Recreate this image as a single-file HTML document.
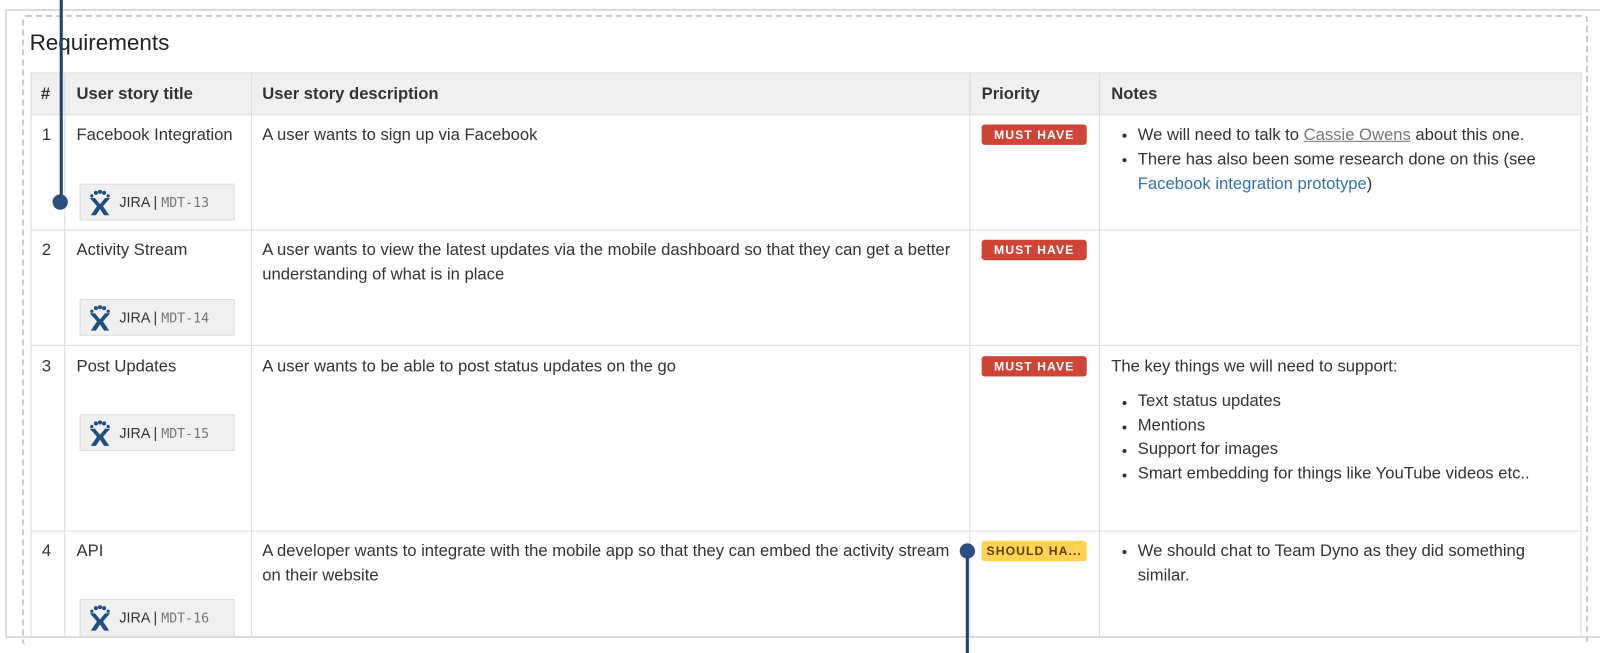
<!DOCTYPE html>
<html><head><meta charset="utf-8"><style>
*{margin:0;padding:0;box-sizing:border-box}
body{width:1600px;height:645px;background:#fff;position:relative;overflow:hidden;font-family:"Liberation Sans",Arial,sans-serif;color:#333;font-size:16.3px}
#w{position:absolute;left:0;top:0;width:1568px;height:632px;transform:scale(1.0204);transform-origin:0 0}
.a{position:absolute;white-space:nowrap;line-height:24px}
.hl{position:absolute;background:#ddd;height:1px}
.vl{position:absolute;background:#ddd;width:1px}
.badge{position:absolute;background:#d04437;color:#fff;font-weight:bold;font-size:12px;letter-spacing:1px;border-radius:3px;height:20px;line-height:20px;text-align:center;width:103px}
.jira{position:absolute;left:78px;width:152px;height:36px;background:#f0f0f0;border:1px solid #ddd;font-size:14px;line-height:34px;padding-left:38px;color:#333}
.jira span{color:#777;font-family:"DejaVu Sans Mono","Liberation Mono",monospace;font-size:13px}
.jira svg{position:absolute;left:7px;top:5px}
ul{list-style:none}
li{position:relative;padding-left:26px}
li:before{content:"";position:absolute;left:11px;top:11px;width:4px;height:4px;border-radius:2px;background:#333}
</style></head><body>
<div style="position:absolute;left:5px;top:9px;width:1600px;height:629px;border:2px solid #ddd;border-right:none"></div>
<div style="position:absolute;left:22px;top:15px;width:1566px;height:630px;border:2px dashed #ccc;border-bottom:none;border-radius:4px"></div>
<div id="w">
<div class="a" style="left:29px;top:29px;font-size:22px;line-height:26px;color:#222">Requirements</div>
<div style="position:absolute;left:30px;top:72px;width:1520px;height:40px;background:#f0f0f0"></div>
<div class="hl" style="left:30px;top:71px;width:1520px"></div>
<div class="hl" style="left:30px;top:112px;width:1520px"></div>
<div class="hl" style="left:30px;top:225px;width:1520px"></div>
<div class="hl" style="left:30px;top:338px;width:1520px"></div>
<div class="hl" style="left:30px;top:520px;width:1520px"></div>
<div class="vl" style="left:30px;top:71px;height:553px"></div>
<div class="vl" style="left:63px;top:71px;height:553px"></div>
<div class="vl" style="left:246px;top:71px;height:553px"></div>
<div class="vl" style="left:950px;top:71px;height:553px"></div>
<div class="vl" style="left:1077px;top:71px;height:553px"></div>
<div class="vl" style="left:1549px;top:71px;height:553px"></div>
<div class="a" style="left:40px;top:80px;font-weight:bold">#</div>
<div class="a" style="left:75px;top:80px;font-weight:bold">User story title</div>
<div class="a" style="left:257px;top:80px;font-weight:bold">User story description</div>
<div class="a" style="left:962px;top:80px;font-weight:bold">Priority</div>
<div class="a" style="left:1089px;top:80px;font-weight:bold">Notes</div>

<div class="a" style="left:41px;top:120px">1</div>
<div class="a" style="left:75px;top:120px">Facebook Integration</div>
<div class="a" style="left:257px;top:120px">A user wants to sign up via Facebook</div>
<div class="badge" style="left:962px;top:122px">MUST HAVE</div>
<ul class="a" style="left:1089px;top:120px"><li>We will need to talk to <span style="color:#777;text-decoration:underline">Cassie Owens</span> about this one.</li><li>There has also been some research done on this (see<br><span style="color:#3572b0">Facebook integration prototype</span>)</li></ul>

<div class="a" style="left:41px;top:233px">2</div>
<div class="a" style="left:75px;top:233px">Activity Stream</div>
<div class="a" style="left:257px;top:233px">A user wants to view the latest updates via the mobile dashboard so that they can get a better<br>understanding of what is in place</div>
<div class="badge" style="left:962px;top:235px">MUST HAVE</div>

<div class="a" style="left:41px;top:347px">3</div>
<div class="a" style="left:75px;top:347px">Post Updates</div>
<div class="a" style="left:257px;top:347px">A user wants to be able to post status updates on the go</div>
<div class="badge" style="left:962px;top:349px">MUST HAVE</div>
<div class="a" style="left:1089px;top:347px">The key things we will need to support:</div>
<ul class="a" style="left:1089px;top:382px;line-height:23.5px"><li>Text status updates</li><li>Mentions</li><li>Support for images</li><li>Smart embedding for things like YouTube videos etc..</li></ul>

<div class="a" style="left:41px;top:528px">4</div>
<div class="a" style="left:75px;top:528px">API</div>
<div class="a" style="left:257px;top:528px">A developer wants to integrate with the mobile app so that they can embed the activity stream<br>on their website</div>
<div class="badge" style="left:962px;top:530px;background:#ffd351;color:#594300;width:103px">SHOULD HA...</div>
<ul class="a" style="left:1089px;top:528px"><li>We should chat to Team Dyno as they did something<br>similar.</li></ul>

<div class="jira" style="top:180px"><svg width="24" height="26" viewBox="0 0 24 26"><g fill="#205081"><circle cx="8" cy="3" r="2"/><circle cx="12" cy="2" r="2"/><circle cx="16" cy="3" r="2"/><circle cx="4" cy="6" r="1.6"/><circle cx="20" cy="6" r="1.6"/><path d="M2 8h5l5 6 5-6h5l-7 8 6 9h-5l-4-6-4 6H3l6-9z"/></g></svg>JIRA | <span>MDT-13</span></div>
<div class="jira" style="top:293px"><svg width="24" height="26" viewBox="0 0 24 26"><g fill="#205081"><circle cx="8" cy="3" r="2"/><circle cx="12" cy="2" r="2"/><circle cx="16" cy="3" r="2"/><circle cx="4" cy="6" r="1.6"/><circle cx="20" cy="6" r="1.6"/><path d="M2 8h5l5 6 5-6h5l-7 8 6 9h-5l-4-6-4 6H3l6-9z"/></g></svg>JIRA | <span>MDT-14</span></div>
<div class="jira" style="top:406px"><svg width="24" height="26" viewBox="0 0 24 26"><g fill="#205081"><circle cx="8" cy="3" r="2"/><circle cx="12" cy="2" r="2"/><circle cx="16" cy="3" r="2"/><circle cx="4" cy="6" r="1.6"/><circle cx="20" cy="6" r="1.6"/><path d="M2 8h5l5 6 5-6h5l-7 8 6 9h-5l-4-6-4 6H3l6-9z"/></g></svg>JIRA | <span>MDT-15</span></div>
<div class="jira" style="top:587px;height:37px"><svg width="24" height="26" viewBox="0 0 24 26"><g fill="#205081"><circle cx="8" cy="3" r="2"/><circle cx="12" cy="2" r="2"/><circle cx="16" cy="3" r="2"/><circle cx="4" cy="6" r="1.6"/><circle cx="20" cy="6" r="1.6"/><path d="M2 8h5l5 6 5-6h5l-7 8 6 9h-5l-4-6-4 6H3l6-9z"/></g></svg>JIRA | <span>MDT-16</span></div>

<svg style="position:absolute;left:0;top:0" width="1568" height="640">
<line x1="60" y1="0" x2="60" y2="197" stroke="#1f4173" stroke-width="3"/>
<circle cx="59" cy="198" r="7.5" fill="#2c4d7f"/>
<line x1="948" y1="540" x2="948" y2="640" stroke="#1f4173" stroke-width="3"/>
<circle cx="948" cy="540" r="7.5" fill="#2c4d7f"/>
</svg>
</div>
</body></html>
